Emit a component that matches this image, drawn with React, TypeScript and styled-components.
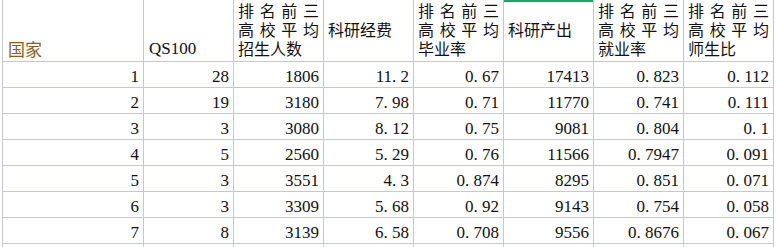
import React from "react";
import styled, { createGlobalStyle } from "styled-components";

const GlobalStyle = createGlobalStyle`
  html, body {
    margin: 0;
    padding: 0;
    background: #ffffff;
    overflow: hidden;
  }
`;

const GRID = "#c5c8d4";
const CJK = `"Noto Sans CJK SC", "Noto Sans", sans-serif`;
const NUM = `"Liberation Serif", "Noto Sans CJK SC", serif`;

const Sheet = styled.div`
  display: grid;
  grid-template-columns: 141px repeat(7, 90px);
  grid-template-rows: 62px repeat(8, 26px);
  margin-left: 2px;
  border-left: 1px solid ${GRID};
  width: max-content;
`;

const HeadCell = styled.div<{ $valign: "center" | "bottom"; $selected?: boolean }>`
  box-sizing: border-box;
  border-right: 1px solid ${GRID};
  border-bottom: 1px solid ${GRID};
  display: flex;
  flex-direction: column;
  justify-content: ${(p) => (p.$valign === "center" ? "center" : "flex-end")};
  padding: 0 4px 2px 4px;
  font-family: ${CJK};
  font-size: 16px;
  line-height: 19px;
  color: #111;
  box-shadow: ${(p) => (p.$selected ? "inset 0 2px 0 #21a366" : "none")};
`;

const HeadLine = styled.div<{ $spread?: boolean }>`
  white-space: nowrap;
  text-align: justify;
  text-align-last: ${(p) => (p.$spread ? "justify" : "left")};
`;

const CountryLabel = styled.span`
  font-family: ${CJK};
  font-size: 17px;
  line-height: 20px;
  color: #8c5f1c;
  padding-left: 1px;
`;

const QsLabel = styled.span`
  font-family: ${NUM};
  font-size: 17px;
  line-height: 20px;
  color: #111;
  padding-left: 1px;
`;

const DataCell = styled.div`
  box-sizing: border-box;
  border-right: 1px solid ${GRID};
  border-bottom: 1px solid ${GRID};
  display: flex;
  align-items: flex-end;
  justify-content: flex-end;
  padding-right: 4px;
  font-family: ${NUM};
  font-size: 17px;
  line-height: 20px;
  color: #111;
  white-space: nowrap;
`;

const Dot = styled.span`
  display: inline-block;
  width: 0.5em;
  text-align: left;
`;

type Header = {
  lines?: string[];
  label?: React.ReactNode;
  valign: "center" | "bottom";
  selected?: boolean;
};

const headers: Header[] = [
  { label: <CountryLabel>国家</CountryLabel>, valign: "bottom" },
  { label: <QsLabel>QS100</QsLabel>, valign: "bottom" },
  { lines: ["排名前三", "高校平均", "招生人数"], valign: "center" },
  { lines: ["科研经费"], valign: "center" },
  { lines: ["排名前三", "高校平均", "毕业率"], valign: "center" },
  { lines: ["科研产出"], valign: "center", selected: true },
  { lines: ["排名前三", "高校平均", "就业率"], valign: "center" },
  { lines: ["排名前三", "高校平均", "师生比"], valign: "center" },
];

const rows: string[][] = [
  ["1", "28", "1806", "11.2", "0.67", "17413", "0.823", "0.112"],
  ["2", "19", "3180", "7.98", "0.71", "11770", "0.741", "0.111"],
  ["3", "3", "3080", "8.12", "0.75", "9081", "0.804", "0.1"],
  ["4", "5", "2560", "5.29", "0.76", "11566", "0.7947", "0.091"],
  ["5", "3", "3551", "4.3", "0.874", "8295", "0.851", "0.071"],
  ["6", "3", "3309", "5.68", "0.92", "9143", "0.754", "0.058"],
  ["7", "8", "3139", "6.58", "0.708", "9556", "0.8676", "0.067"],
  ["", "", "", "", "", "", "", ""],
];

// SimSun-style numbers: the decimal point takes a full half-em cell
const Num = ({ value }: { value: string }) => {
  const [int, frac] = value.split(".");
  return (
    <span>
      {int}
      {frac !== undefined && (
        <>
          <Dot>.</Dot>
          {frac}
        </>
      )}
    </span>
  );
};

export default function App() {
  return (
    <>
      <GlobalStyle />
      <Sheet>
        {headers.map((h, i) => (
          <HeadCell key={`h${i}`} $valign={h.valign} $selected={h.selected}>
            {h.label}
            {h.lines?.map((line, j) => (
              <HeadLine key={j} $spread={h.lines!.length > 1 && j < h.lines!.length - 1}>
                {line}
              </HeadLine>
            ))}
          </HeadCell>
        ))}
        {rows.map((row, r) =>
          row.map((v, c) => (
            <DataCell key={`${r}-${c}`}>
              <Num value={v} />
            </DataCell>
          ))
        )}
      </Sheet>
    </>
  );
}
